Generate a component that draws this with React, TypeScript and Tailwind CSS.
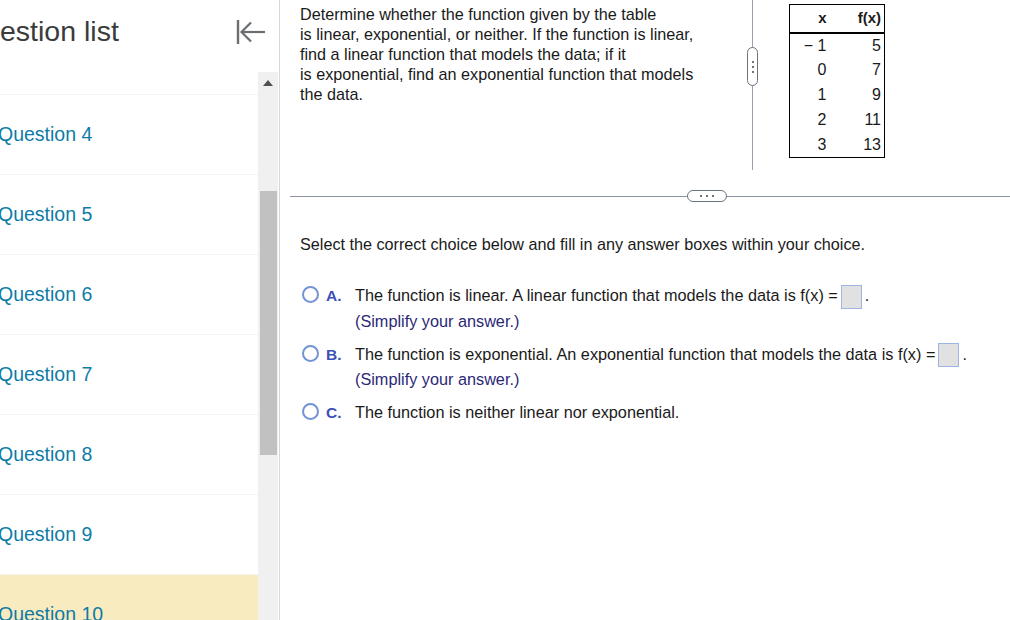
import React from "react";

const questions = [4, 5, 6, 7, 8, 9, 10];

function CollapseIcon() {
  return (
    <svg width="30" height="26" viewBox="0 0 30 26" fill="none">
      <line x1="2" y1="1" x2="2" y2="25" stroke="#6b6e70" strokeWidth="2.4" />
      <line x1="6" y1="13" x2="29" y2="13" stroke="#6b6e70" strokeWidth="2.2" />
      <polyline points="15,3.5 5.5,13 15,22.5" stroke="#6b6e70" strokeWidth="2.2" fill="none" />
    </svg>
  );
}

function Sidebar() {
  return (
    <div className="flex h-full w-[280px] shrink-0 flex-col border-r border-[#d6d6dc]">
      <div className="flex h-[72px] shrink-0 items-start justify-between pr-[13px] pt-[14px]">
        <div className="ml-[-38px] whitespace-nowrap text-[28.5px] leading-[34px] text-[#3b3b3b]">Question list</div>
        <div className="mt-[5px]">
          <CollapseIcon />
        </div>
      </div>
      <div className="flex min-h-0 flex-1">
        <div className="w-[258px] shrink-0 overflow-hidden">
          <div className="h-[22px]" />
          {questions.map((q) => (
            <div
              key={q}
              className={
                q === 10
                  ? "flex h-[80px] items-center border-t border-[#f5f5f5] bg-[#f9ebc0]"
                  : "flex h-[80px] items-center border-t border-[#f5f5f5]"
              }
            >
              <span className="ml-[-2px] text-[19.5px] text-[#0e7ba6]">Question {q}</span>
            </div>
          ))}
        </div>
        <div className="relative w-[20px] shrink-0 bg-[#f0f0f0]">
          <div className="absolute left-[5px] top-[8px] h-0 w-0 border-x-[5px] border-b-[6px] border-x-transparent border-b-[#505050]" />
          <div className="absolute left-[2px] top-[119px] h-[264px] w-[17px] bg-[#c1c1c1]" />
        </div>
      </div>
    </div>
  );
}

function Table() {
  const rows = [
    ["\u2212 1", "5"],
    ["0", "7"],
    ["1", "9"],
    ["2", "11"],
    ["3", "13"],
  ];
  return (
    <table className="border-collapse border border-black text-[16px] text-[#1a1a1a]">
      <thead>
        <tr className="h-[28px] border-b-2 border-black">
          <th className="w-[45px] pr-[8px] text-right text-[15px] font-bold">x</th>
          <th className="w-[50px] pr-[3px] text-right text-[15px] font-bold">f(x)</th>
        </tr>
      </thead>
      <tbody>
        {rows.map((r, i) => (
          <tr key={i} className="h-[25px]">
            <td className="pr-[8px] text-right">{r[0]}</td>
            <td className="pr-[3px] text-right">{r[1]}</td>
          </tr>
        ))}
      </tbody>
    </table>
  );
}

function AnswerBox() {
  return (
    <span className="mx-[3px] inline-block h-[24px] w-[21px] border border-[#9db3e3] bg-[#e1e1e1] align-middle" />
  );
}

function Option({ label, children, simplify }: { label: string; children: React.ReactNode; simplify?: boolean }) {
  return (
    <div className="flex items-start">
      <div className="ml-[2px] mt-[3px] h-[17px] w-[17px] shrink-0 rounded-full border-2 border-[#7393d6]" />
      <div className="ml-[7px] w-[29px] shrink-0 text-[15.5px] font-bold leading-[25px] text-[#3c4fb8]">{label}</div>
      <div className="text-[16.25px] leading-[25px] text-[#1a1a1a]">
        <div>{children}</div>
        {simplify && <div className="text-[#2b2877]">(Simplify your answer.)</div>}
      </div>
    </div>
  );
}

function Main() {
  return (
    <div className="flex min-w-0 flex-1 flex-col">
      <div className="flex h-[196px] shrink-0">
        <div className="w-[472px] shrink-0 pl-[20px] pt-[4px] text-[16.2px] leading-[20px] text-[#1a1a1a]">
          Determine whether the function given by the table
          <br />
          is linear, exponential, or neither. If the function is linear,
          <br />
          find a linear function that models the data; if it
          <br />
          is exponential, find an exponential function that models
          <br />
          the data.
        </div>
        <div className="relative h-[170px] w-px shrink-0 bg-[#9aa0ad]">
          <div className="absolute left-[-5px] top-[47px] flex h-[39px] w-[11px] flex-col items-center justify-center gap-[3px] rounded-full border border-[#6b7280] bg-white">
            <span className="h-[2px] w-[2px] rounded-full bg-[#444]" />
            <span className="h-[2px] w-[2px] rounded-full bg-[#444]" />
            <span className="h-[2px] w-[2px] rounded-full bg-[#444]" />
          </div>
        </div>
        <div className="pl-[36px] pt-[4px]">
          <Table />
        </div>
      </div>
      <div className="relative ml-[10px] h-px shrink-0 bg-[#8a92a4]">
        <div className="absolute left-[397px] top-[-6px] flex h-[12px] w-[40px] items-center justify-center gap-[4px] rounded-full border border-[#6b7280] bg-white">
          <span className="h-[2px] w-[2px] rounded-full bg-[#444]" />
          <span className="h-[2px] w-[2px] rounded-full bg-[#444]" />
          <span className="h-[2px] w-[2px] rounded-full bg-[#444]" />
        </div>
      </div>
      <div className="pl-[20px] pt-[37px]">
        <div className="text-[16.2px] leading-[20px] text-[#1a1a1a]">
          Select the correct choice below and fill in any answer boxes within your choice.
        </div>
        <div className="mt-[29px] flex flex-col gap-[8px]">
          <Option label="A." simplify>
            The function is linear. A linear function that models the data is f(x) =<AnswerBox />.
          </Option>
          <Option label="B." simplify>
            The function is exponential. An exponential function that models the data is f(x) =<AnswerBox />.
          </Option>
          <Option label="C.">The function is neither linear nor exponential.</Option>
        </div>
      </div>
    </div>
  );
}

export default function App() {
  return (
    <div
      className="flex h-[620px] w-[1010px] overflow-hidden bg-white"
      style={{ fontFamily: '"Liberation Sans", Arial, sans-serif' }}
    >
      <Sidebar />
      <Main />
    </div>
  );
}
